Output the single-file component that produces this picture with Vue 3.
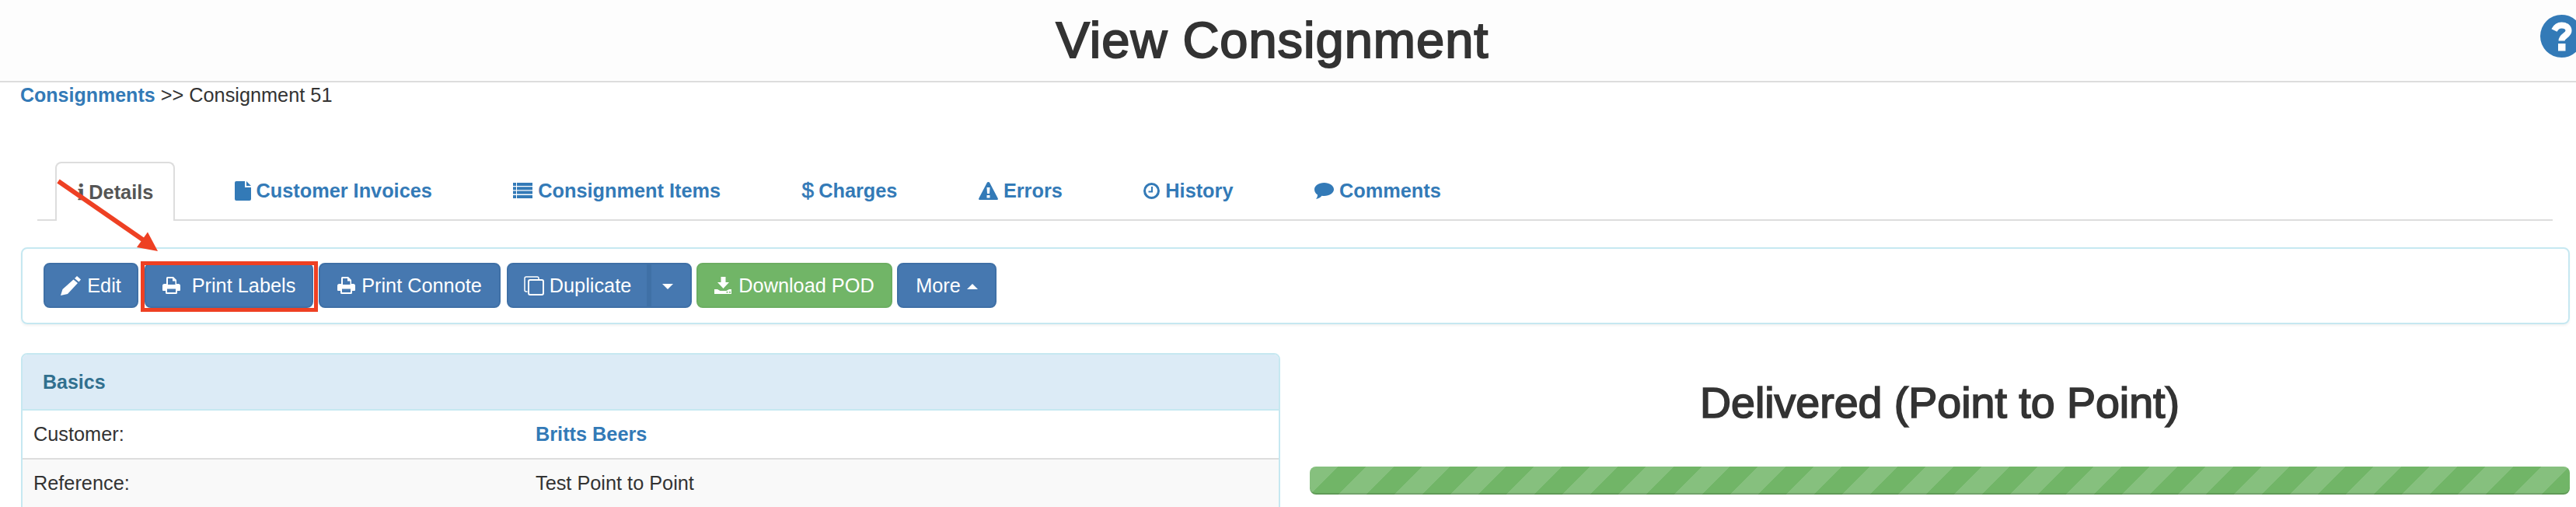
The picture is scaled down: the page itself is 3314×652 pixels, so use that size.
<script setup>
const tabs = [
  { label: 'Customer Invoices', icon: 'file' },
  { label: 'Consignment Items', icon: 'list' },
  { label: 'Charges', icon: 'usd' },
  { label: 'Errors', icon: 'warn' },
  { label: 'History', icon: 'clock' },
  { label: 'Comments', icon: 'comment' }
]
const printPath = 'M5 1.500A1.500 1.500 0 0 1 6.500 0H14l4 4v5h2.500A2.500 2.500 0 0 1 23 11.500V17a1 1 0 0 1-1 1h-3v2.500a1.500 1.500 0 0 1-1.500 1.500h-12A1.500 1.500 0 0 1 4 20.500V18H1a1 1 0 0 1-1-1v-5.500A2.500 2.500 0 0 1 2.500 9H5zM7 2v8h9.500V5.500H13V2zM6 15.500V20h11v-4.500z'
</script>

<template>
  <div class="page">
    <header class="top">
      <h1>View Consignment</h1>
      <svg class="help" viewBox="0 0 55 55">
        <circle cx="27.500" cy="27.500" r="27.500" fill="#337ab7" />
        <path d="M18 20c2-4 5-6.500 9.500-6.500 5 0 9 2.500 9 7 0 6-9 6.500-9 13" fill="none" stroke="#fff" stroke-width="8" />
        <rect x="23" y="37" width="9.500" height="9.500" fill="#fff" />
      </svg>
    </header>

    <div class="crumbs"><a>Consignments</a> &gt;&gt; Consignment 51</div>

    <nav class="tabs">
      <div class="tab active"><span class="info">i</span> Details</div>
      <div v-for="t in tabs" :key="t.label" class="tab">
        <svg v-if="t.icon === 'file'" class="ico file" viewBox="0 0 21 25"><path d="M0 2a2 2 0 0 1 2-2h11v8h8v15a2 2 0 0 1-2 2H2a2 2 0 0 1-2-2zM15 0l6 6h-6z" fill="#337ab7" /></svg>
        <svg v-else-if="t.icon === 'list'" class="ico list" viewBox="0 0 25 20"><path d="M0 0h4v4H0zM5 0h20v4H5zM0 5.300h4v4H0zM5 5.300h20v4H5zM0 10.600h4v4H0zM5 10.600h20v4H5zM0 16h4v4H0zM5 16h20v4H5z" fill="#337ab7" /></svg>
        <span v-else-if="t.icon === 'usd'" class="usd">$</span>
        <svg v-else-if="t.icon === 'warn'" class="ico warn" viewBox="0 0 25 23"><path fill-rule="evenodd" d="M12.500 0c1 0 1.500.5 2 1.500L24.700 21c.5 1 0 2-1.200 2h-22C.3 23-.2 22 .3 21L10.500 1.500c.5-1 1-1.500 2-1.500zM10.500 7l.5 8h3l.5-8zM10.500 17v3.500h4V17z" fill="#337ab7" /></svg>
        <svg v-else-if="t.icon === 'clock'" class="ico clock" viewBox="0 0 21 21"><circle cx="10.500" cy="10.500" r="9" fill="none" stroke="#337ab7" stroke-width="3" /><path d="M11 5v6.500H6.500" fill="none" stroke="#337ab7" stroke-width="2" /></svg>
        <svg v-else class="ico comment" viewBox="0 0 25 21"><path d="M12.500 0C19.400 0 25 3.700 25 8.500S19.400 17 12.500 17c-1 0-2 0-3-.2C8 18.800 5 20.500 2 21c1.200-1.500 2-3 2-5.500C1.500 14 0 11.500 0 8.500 0 3.700 5.600 0 12.500 0z" fill="#337ab7" /></svg>
        {{ t.label }}
      </div>
    </nav>

    <section class="toolbar">
      <button class="btn edit">
        <svg class="bi pencil" viewBox="0 0 26 25"><path d="M21 0l5 4.500-2.500 3-5.500-4.500zM16.500 4.500l5.500 4.500L9 23 0 25l2.500-8z" fill="#fff" /></svg>
        Edit
      </button>
      <button class="btn labels">
        <svg class="bi print" viewBox="0 0 23 22"><path fill-rule="evenodd" :d="printPath" fill="#fff" /></svg>
        Print Labels
      </button>
      <button class="btn connote">
        <svg class="bi print" viewBox="0 0 23 22"><path fill-rule="evenodd" :d="printPath" fill="#fff" /></svg>
        Print Connote
      </button>
      <div class="split">
        <button class="btn dup">
          <svg class="bi copy" viewBox="0 0 26 25"><path d="M4.500 20H3a2 2 0 0 1-2-2V3a2 2 0 0 1 2-2h14a2 2 0 0 1 2 2v1" fill="none" stroke="#fff" stroke-width="1.500" /><rect x="6" y="5" width="19" height="19" rx="2" fill="none" stroke="#fff" stroke-width="2" /></svg>
          Duplicate
        </button>
        <button class="btn caret-btn"><i class="caret down"></i></button>
      </div>
      <button class="btn green">
        <svg class="bi dl" viewBox="0 0 23 22"><path fill-rule="evenodd" d="M8.500 0h6v7h4.500l-7.500 8-7.500-8h4.500zM0 16h4l3.500 2h8l3.500-2h3v6H0zM15.500 19v1.500h2V19zM19 19v1.500h2V19z" fill="#fff" /></svg>
        Download POD
      </button>
      <button class="btn more">More <i class="caret up"></i></button>
    </section>

    <main class="columns">
      <section class="panel">
        <div class="panel-head">Basics</div>
        <div class="row"><span class="key">Customer:</span><a class="val">Britts Beers</a></div>
        <div class="row alt"><span class="key">Reference:</span><span class="val">Test Point to Point</span></div>
      </section>
      <section class="status">
        <h2>Delivered (Point to Point)</h2>
        <div class="bar"></div>
      </section>
    </main>

    <div class="redbox"></div>
    <svg class="arrow" viewBox="0 0 210 100" width="210" height="100">
      <path d="M6 9L126 92" fill="none" stroke="#ee4023" stroke-width="6" />
      <path d="M134 99L107 94l14-19.500z" fill="#ee4023" />
    </svg>
  </div>
</template>

<style>
html, body { margin: 0; overflow: hidden; background: #fff; }
</style>

<style scoped>
.page {
  position: relative;
  width: 3314px;
  height: 652px;
  overflow: hidden;
  font-family: "Liberation Sans", Arial, sans-serif;
  font-size: 25.300px;
  color: #333;
  background: #fff;
}
.top {
  position: relative;
  height: 104px;
  padding-right: 40px;
  box-sizing: content-box;
  background: #fdfdfd;
  border-bottom: 2px solid #ddd;
  display: flex;
  align-items: center;
  justify-content: center;
}
h1 {
  margin: 0;
  font-size: 65px;
  font-weight: 400;
  letter-spacing: 1px;
  -webkit-text-stroke: 2px #333;
  line-height: 104px;
}
.help {
  position: absolute;
  left: 3268px;
  top: 19px;
  width: 55px;
  height: 55px;
}
.crumbs {
  padding: 2px 0 0 26px;
  line-height: 28px;
  height: 28px;
}
.crumbs a { color: #337ab7; font-weight: 700; font-size: 25px; }
.tabs {
  display: flex;
  gap: 44.500px;
  margin: 72px 0 0 48px;
  width: 3213px;
  height: 74px;
  border-bottom: 2px solid #ddd;
  padding-left: 23px;
  font-weight: 700;
  color: #337ab7;
}
.tab {
  display: flex;
  align-items: center;
  gap: 7px;
  height: 74px;
  padding: 0 30px;
  box-sizing: border-box;
  white-space: nowrap;
}
.tab.active {
  width: 154px;
  height: 76px;
  padding: 0 0 0 27px;
  margin-right: 2px;
  gap: 6px;
  color: #555;
  background: #fff;
  border: 2px solid #ddd;
  border-bottom: 0;
  border-radius: 8px 8px 0 0;
}
.info { font-family: "Liberation Serif", serif; font-weight: 700; font-size: 30px; line-height: 26px; -webkit-text-stroke: .6px #555; }
.ico { display: block; flex: none; }
.file { width: 21px; height: 25px; }
.list { width: 25px; height: 20px; }
.warn { width: 25px; height: 23px; }
.clock { width: 21px; height: 21px; }
.comment { width: 25px; height: 21px; }
.usd { font-size: 28px; font-weight: 400; -webkit-text-stroke: .6px #337ab7; margin-right: -1px; }
.toolbar {
  display: flex;
  align-items: flex-start;
  gap: 8px;
  box-sizing: border-box;
  margin: 34px 8px 0 27px;
  height: 99px;
  padding: 18px 0 0 27px;
  border: 2px solid #c6e8f1;
  border-radius: 8px;
  box-shadow: 0 2px 3px rgba(0, 0, 0, .05);
}
.btn {
  display: flex;
  align-items: center;
  justify-content: center;
  gap: 8px;
  height: 58px;
  box-sizing: border-box;
  padding: 0;
  font: inherit;
  color: #fff;
  background: #4678b0;
  border: 2px solid #3f70a6;
  border-radius: 8px;
  white-space: nowrap;
}
.bi { display: block; flex: none; }
.pencil { width: 26px; height: 25px; }
.print { width: 23px; height: 22px; }
.copy { width: 26px; height: 25px; }
.dl { width: 23px; height: 22px; }
.edit { width: 122px; }
.labels { width: 217px; gap: 15px; }
.connote { width: 234px; margin-left: -1px; }
.split { display: flex; }
.dup { width: 182px; gap: 7px; border-radius: 8px 0 0 8px; }
.caret-btn { width: 56px; padding-right: 8px; border-radius: 0 8px 8px 0; border-left: 4px solid #3f70a6; }
.green { width: 252px; margin-left: -2px; background: #71b567; border-color: #6cae62; }
.more { width: 128px; margin-left: -2px; gap: 8px; }
.caret { display: block; width: 0; height: 0; border-left: 7px solid transparent; border-right: 7px solid transparent; }
.caret.down { border-top: 7px solid #fff; margin-top: 2px; }
.caret.up { border-bottom: 7px solid #fff; margin-top: 3px; }
.columns {
  display: grid;
  grid-template-columns: 1620px 1621px;
  column-gap: 38px;
  margin: 37px 8px 0 27px;
}
.panel {
  border: 2px solid #c6e8f1;
  border-radius: 8px 8px 0 0;
  height: 260px;
  box-sizing: border-box;
}
.panel-head {
  height: 70px;
  display: flex;
  align-items: center;
  padding-left: 26px;
  background: #dcebf6;
  border-bottom: 2px solid #c6e8f1;
  color: #31708f;
  font-weight: 700;
  font-size: 25px;
  border-radius: 6px 6px 0 0;
}
.row {
  height: 61px;
  display: flex;
  align-items: center;
  padding-left: 14px;
  border-bottom: 2px solid #ddd;
}
.row.alt { background: #f9f9f9; }
.key { width: 646px; flex: none; }
a.val { color: #337ab7; font-weight: 700; }
.status h2 {
  margin: 0;
  height: 146px;
  display: flex;
  align-items: center;
  justify-content: center;
  padding-bottom: 18px;
  box-sizing: border-box;
  font-size: 55.500px;
  font-weight: 400;
  -webkit-text-stroke: 1.700px #333;
}
.bar {
  height: 36px;
  border-radius: 8px;
  background-color: #71b567;
  background-image: linear-gradient(135deg, rgba(255,255,255,.15) 25%, transparent 25%, transparent 50%, rgba(255,255,255,.15) 50%, rgba(255,255,255,.15) 75%, transparent 75%, transparent);
  background-size: 72px 72px;
  box-shadow: inset 0 -2px 0 rgba(0, 0, 0, .15);
}
.redbox {
  position: absolute;
  left: 181px;
  top: 336px;
  width: 228px;
  height: 65px;
  box-sizing: border-box;
  border: 5px solid #ee4023;
}
.arrow {
  position: absolute;
  left: 69px;
  top: 224px;
}
</style>
